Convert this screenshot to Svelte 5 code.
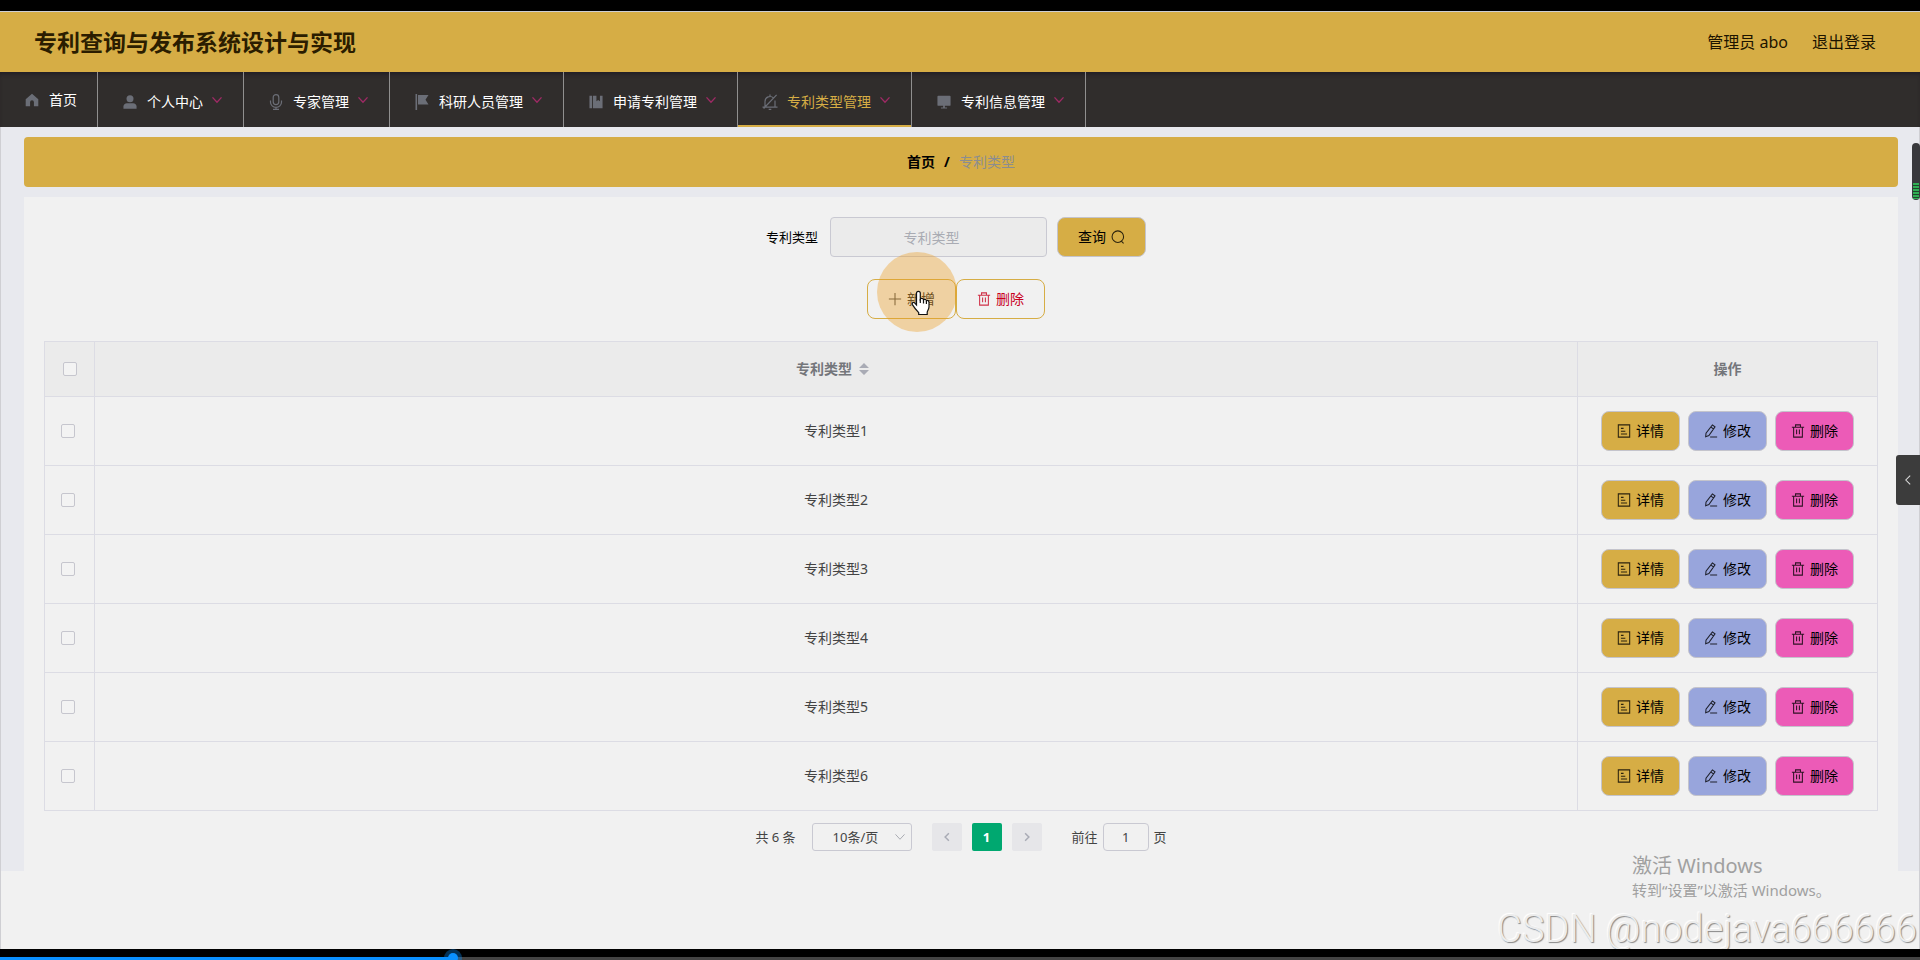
<script>
  const menus = [
    { name: '个人中心', icon: 'user' },
    { name: '专家管理', icon: 'mic' },
    { name: '科研人员管理', icon: 'flag' },
    { name: '申请专利管理', icon: 'book' },
    { name: '专利类型管理', icon: 'bell', active: true },
    { name: '专利信息管理', icon: 'monitor' },
  ];

  let rows = $state([1, 2, 3, 4, 5, 6].map((n) => ({ id: n, name: `专利类型${n}`, checked: false })));
  let keyword = $state('');
  let pageSize = $state('10');
  let jumpTo = $state('1');
  const played = 23.6;

  let allChecked = $derived(rows.every((r) => r.checked));

  function toggleAll() {
    const next = !allChecked;
    rows.forEach((r) => (r.checked = next));
  }
</script>

{#snippet icon(name)}
  <svg class="icon {name}" viewBox="0 0 16 16" aria-hidden="true">
    {#if name === 'home'}
      <path fill="currentColor" d="M8 .8 15.2 7v8.2H10.2V10.5a2.2 2.2 0 0 0-4.4 0v4.7H.8V7z" />
    {:else if name === 'user'}
      <circle cx="8" cy="4.4" r="4" fill="currentColor" />
      <path fill="currentColor" d="M.5 15.6v-2.4C.5 10.8 2.3 9.4 4.5 9.4h7c2.2 0 4 1.4 4 3.8v2.4z" />
    {:else if name === 'mic'}
      <g class="line"><rect x="5.2" y=".6" width="5.6" height="10" rx="2.8" /><path d="M2.5 6.5v1.8a5.5 5 0 0 0 11 0V6.500M8 13.300v2M5 15.400h6" /></g>
    {:else if name === 'flag'}
      <path fill="currentColor" d="M1.5 0h1.6v16H1.5zM4 1h10.500l-3 4.700 3 4.700H4z" />
    {:else if name === 'book'}
      <path fill="currentColor" d="M.5.8h3v14.4h-3zM4.5.8h4v6.4l2-1.6 2 1.6V.8h3v14.4h-11z" />
    {:else if name === 'bell'}
      <g class="line"><path d="M3 13V7.500a5 5 0 0 1 8.600-3.400M13 6.500V13M.5 13.200h15M6.700 15.400h2.600M8 2.400V.6M1.600 14.500 14.600.8" /></g>
    {:else if name === 'monitor'}
      <path fill="currentColor" d="M1.5.8h13a1 1 0 0 1 1 1v9.6a1 1 0 0 1-1 1h-13a1 1 0 0 1-1-1V1.8a1 1 0 0 1 1-1zM7 12.400h2v1.800h2.500v1.200h-7v-1.200H7z" />
    {:else if name === 'down'}
      <path class="line" d="M2 4.500 8 11 14 4.500" />
    {:else if name === 'left'}
      <path class="line" d="M10.500 3 5.500 8l5 5" />
    {:else if name === 'right'}
      <path class="line" d="m5.500 3 5 5-5 5" />
    {:else if name === 'magnifier'}
      <g class="line"><circle cx="7.8" cy="7.6" r="6.6" /><path d="m11.800 12.600 2.600 2.600" /></g>
    {:else if name === 'plus'}
      <path class="line" d="M8 1v14M1 8h14" />
    {:else if name === 'trash'}
      <path class="line" d="M1 3.600h14M3 3.600v11.400h10V3.600M5.200 3.400V1h5.600v2.400M6.400 6.400v5.400M9.600 6.400v5.400" />
    {:else if name === 'doc'}
      <path class="line" d="M1.500 1h13v14h-13zM4.500 5h3M4.500 8.200h5M4.500 11.500h7" />
    {:else if name === 'edit'}
      <path class="line" d="M9.600 1.200 12.600 3.300 5.600 13.200 1.900 14.600l.4-4zM8 3.600l3 2.100M7 14.800H15" />
    {/if}
  </svg>
{/snippet}

<div class="player">
  <div class="screen">
    <header>
      <h1>专利查询与发布系统设计与实现</h1>
      <div class="account">
        <span>管理员 abo</span>
        <a href="#logout">退出登录</a>
      </div>
    </header>

    <nav>
      <a class="item home" href="#home">{@render icon('home')}<span>首页</span></a>
      {#each menus as menu}
        <a class="item sub" class:active={menu.active} href="#{menu.icon}">
          {@render icon(menu.icon)}<span>{menu.name}</span>{@render icon('down')}
        </a>
      {/each}
    </nav>

    <main>
      <div class="breadcrumb">
        <a href="#home">首页</a><b>/</b><span>专利类型</span>
      </div>

      <section class="panel">
        <form class="search" onsubmit={(e) => e.preventDefault()}>
          <label for="keyword">专利类型</label>
          <input id="keyword" type="text" placeholder="专利类型" bind:value={keyword} />
          <button class="btn gold wide" type="submit">查询{@render icon('magnifier')}</button>
        </form>

        <div class="tools">
          <button class="btn outline wide" type="button">{@render icon('plus')}新增</button>
          <button class="btn outline wide danger" type="button">{@render icon('trash')}删除</button>
        </div>

        <table>
          <colgroup><col class="c-check" /><col /><col class="c-ops" /></colgroup>
          <thead>
            <tr>
              <th><input type="checkbox" aria-label="全选" checked={allChecked} onchange={toggleAll} /></th>
              <th>
                <span class="sortable">专利类型
                  <svg class="carets" viewBox="0 0 10 12" aria-hidden="true"><path d="M5 0l5 5H0zM5 12l5-5H0z" /></svg>
                </span>
              </th>
              <th>操作</th>
            </tr>
          </thead>
          <tbody>
            {#each rows as row (row.id)}
              <tr>
                <td class="check"><input type="checkbox" aria-label={row.name} bind:checked={row.checked} /></td>
                <td>{row.name}</td>
                <td>
                  <div class="ops">
                    <button class="btn gold" type="button">{@render icon('doc')}详情</button>
                    <button class="btn blue" type="button">{@render icon('edit')}修改</button>
                    <button class="btn pink" type="button">{@render icon('trash')}删除</button>
                  </div>
                </td>
              </tr>
            {/each}
          </tbody>
        </table>

        <div class="pagination">
          <span>共 {rows.length} 条</span>
          <div class="sizes">
            <select aria-label="每页条数" bind:value={pageSize}>
              <option value="10">10条/页</option>
              <option value="20">20条/页</option>
            </select>
            {@render icon('down')}
          </div>
          <div class="pager">
            <button type="button" aria-label="上一页" disabled>{@render icon('left')}</button>
            <button type="button" class="current">1</button>
            <button type="button" aria-label="下一页" disabled>{@render icon('right')}</button>
          </div>
          <div class="jump">
            <label for="jump">前往</label>
            <input id="jump" type="text" bind:value={jumpTo} />
            <span>页</span>
          </div>
        </div>
      </section>
    </main>

    <div class="click-spot">
      <svg class="hand" viewBox="0 0 19 26" aria-hidden="true">
        <path d="M5.500 15V3.200a1.900 1.900 0 0 1 3.800 0V9c.6-1 3-.8 3.200.8.8-.9 2.700-.5 2.900.9 1-.7 2.600 0 2.600 1.500v4.600c0 2.600-1.500 3.700-1.800 5.400v2.300H7.700v-1.800C5.800 20.600 3.200 17.500 1.400 14.600c-.8-1.500.8-2.800 2.200-1.700z" />
        <path class="knuckle" d="M9.300 9v4M12.500 10v3.500M15.400 11v3" />
      </svg>
    </div>

    <div class="meter"><i></i></div>
    <button class="drawer" type="button" aria-label="展开">{@render icon('left')}</button>

    <div class="activate">
      <p class="big">激活 Windows</p>
      <p>转到“设置”以激活 Windows。</p>
    </div>
    <div class="watermark">CSDN @nodejava666666</div>
  </div>

  <div class="timeline">
    <div class="track"><div class="fill" style:width="{played}%"></div></div>
  </div>
</div>

<style>
  :global(body) { background: #000; }

  .player {
    --gold: #d6ad45;
    --line: #dcdce4;
    box-sizing: border-box;
    display: flex;
    flex-direction: column;
    min-height: 100vh;
    padding-top: 11px;
    font-family: "Noto Sans", "Noto Sans CJK SC", sans-serif;
    font-size: 14px;
    line-height: 20px;
    color: #444;
    overflow: hidden;
  }
  .player * { box-sizing: border-box; }

  .screen {
    position: relative;
    flex: 1;
    background: #f1f1f1;
    border: 1px solid #cfcfd3;
    border-width: 1px 1px 0;
  }

  button, input, select { font: inherit; color: inherit; margin: 0; }
  button { cursor: pointer; }
  a { color: inherit; text-decoration: none; }

  .icon { width: 14px; height: 14px; flex: none; }
  .line { fill: none; stroke: currentColor; stroke-width: 1.2; }

  header {
    display: flex;
    align-items: center;
    justify-content: space-between;
    height: 60px;
    margin: 0 -1px;
    padding: 0 44px 0 34px;
    background: var(--gold);
  }
  h1 { margin: 0; font-size: 23px; line-height: 32px; color: #2b1d00; }
  .account { display: flex; gap: 24px; font-size: 16px; color: #1c1400; }

  nav {
    display: flex;
    height: 55px;
    margin: 0 -1px;
    background: #302d2c;
    box-shadow: inset 0 4px 4px -2px #201d24;
    color: #fff;
  }
  .item {
    display: flex;
    align-items: center;
    padding: 4px 20px 0;
    border-right: 1px solid #908f8f;
  }
  .item.home { padding-top: 1px; }
  .item .icon { margin: 0 10px 0 5px; color: #6b6e77; }
  .item .icon.mic, .item .icon.bell, .item .icon.flag { width: 16px; height: 16px; margin: 0 9px 0 4px; }
  .item .icon.down { width: 12px; height: 12px; margin: -4px 0 0 8px; color: #a02a66; }
  .item .down .line { stroke-width: 1.8; }
  .item.active { color: var(--gold); box-shadow: inset 0 -2px var(--gold); }

  main { padding: 10px 21px 0 23px; background: #e8e9ee; }

  .breadcrumb {
    display: flex;
    align-items: center;
    justify-content: center;
    gap: 9px;
    height: 50px;
    border-radius: 4px;
    background: var(--gold);
    color: #8b8d90;
  }
  .breadcrumb a, .breadcrumb b { color: #000; font-weight: 700; }

  .panel { min-height: 674px; margin-top: 10px; padding: 20px; background: #f1f1f1; }

  .search { display: flex; align-items: center; justify-content: center; gap: 10px; padding-right: 10px; }
  .search label { font-size: 13px; color: #000; padding-right: 2px; }
  .search input {
    width: 217px;
    height: 40px;
    padding: 0 30px 0 16px;
    border: 1px solid #c9c9d2;
    border-radius: 4px;
    background: #ebebeb;
    text-align: center;
  }
  .search input::placeholder { color: #a9abb3; opacity: 1; }

  .btn {
    display: inline-flex;
    align-items: center;
    justify-content: center;
    gap: 5px;
    height: 40px;
    padding: 0 15px;
    border: 1px solid #c4c4cc;
    border-radius: 8px;
    color: #000;
  }
  .btn .icon { opacity: 0.8; }
  .btn.wide { padding: 0 20px; }
  .gold { background: var(--gold); }
  .blue { background: #98a5dc; }
  .pink { background: #ec5bb7; }
  .outline { background: transparent; border-color: var(--gold); color: #222; }
  .danger { color: #c8001e; }

  .tools { display: flex; justify-content: center; margin: 22px 0; padding-right: 10px; }

  table { width: 100%; table-layout: fixed; border-collapse: collapse; text-align: center; }
  .c-check { width: 50px; }
  .c-ops { width: 300px; }
  th, td { padding: 0; border: 1px solid var(--line); }
  th { height: 55px; background: #ebebeb; color: #74767b; font-weight: 700; }
  td { height: 69px; }
  .check { padding-right: 4px; }
  .sortable { display: inline-flex; align-items: center; gap: 7px; padding-right: 7px; }
  .carets { width: 10px; height: 12px; fill: #a9abb5; }
  .ops { display: flex; justify-content: center; gap: 8px; }

  input[type='checkbox'] {
    appearance: none;
    display: block;
    width: 14px;
    height: 14px;
    margin: 0 auto;
    border: 1px solid #c6c6ce;
    border-radius: 2px;
    background: #f3f3f3;
  }
  input[type='checkbox']:checked { background: #00a870; }

  .pagination {
    display: flex;
    align-items: center;
    justify-content: center;
    height: 28px;
    margin-top: 12px;
    font-size: 13px;
  }
  .sizes { position: relative; margin: 0 20px 0 16px; }
  .sizes select {
    appearance: none;
    display: block;
    width: 100px;
    height: 28px;
    padding: 0 20px;
    border: 1px solid #c9c9d2;
    border-radius: 3px;
    background: transparent;
  }
  .sizes .icon { position: absolute; top: 8px; right: 6px; width: 12px; height: 12px; color: #a2a4ac; pointer-events: none; }
  .pager { display: flex; gap: 10px; }
  .pager button {
    display: flex;
    align-items: center;
    justify-content: center;
    width: 30px;
    height: 28px;
    padding: 0;
    border: 0;
    border-radius: 2px;
    background: #e6e6e9;
    color: #a9abb5;
    font-weight: 700;
  }
  .pager .icon .line { stroke-width: 2; }
  .pager .icon { width: 12px; height: 12px; }
  .pager .current { background: #00a870; color: #fff; }
  .jump { display: flex; align-items: center; margin-left: 30px; }
  .jump input {
    width: 46px;
    height: 28px;
    margin: 0 5px;
    padding: 0;
    border: 1px solid #c9c9d2;
    border-radius: 4px;
    background: transparent;
    text-align: center;
  }

  /* click highlight and pointer of the screen recorder */
  .click-spot {
    position: absolute;
    top: 240px;
    left: calc(50% - 83px);
    width: 80px;
    height: 80px;
    border-radius: 50%;
    background: rgba(236, 157, 34, 0.38);
    pointer-events: none;
  }
  .hand { position: absolute; top: 38px; left: 34px; width: 19px; height: 26px; fill: #fff; stroke: #111; stroke-width: 1.2; }
  .knuckle { fill: none; }

  .meter {
    position: absolute;
    top: 131px;
    right: -1px;
    display: flex;
    align-items: flex-end;
    width: 8px;
    height: 57px;
    padding: 1px;
    border-radius: 4px;
    background: #38383c;
  }
  .meter i { width: 100%; height: 16px; background: repeating-linear-gradient(#2fae54 0 2px, #22452d 2px 3px); }

  .drawer {
    position: absolute;
    top: 443px;
    right: -1px;
    display: flex;
    align-items: center;
    justify-content: center;
    width: 24px;
    height: 50px;
    padding: 0;
    border: 0;
    border-radius: 3px 0 0 3px;
    background: #3c3c3c;
    color: #ddd;
  }

  .activate { position: absolute; right: 92px; bottom: 49px; width: 195px; font-size: 15px; line-height: 20px; color: #a0a0a0; white-space: nowrap; }
  .activate p { margin: 0; }
  .activate .big { font-size: 20px; line-height: 28px; }

  .watermark {
    position: absolute;
    right: 2px;
    bottom: -2px;
    font-family: Roboto, "Open Sans", sans-serif;
    font-size: 38px;
    font-weight: 300;
    line-height: 44px;
    color: #ececec;
    text-shadow: 1px 1px 1px #888, -1px -1px 1px #fff;
    white-space: nowrap;
  }

  .timeline { position: relative; padding-top: 8px; background: #000; }
  .track { height: 3px; background: #444; }
  .fill { position: relative; height: 3px; background: #0a90ff; }
  .fill::after {
    content: '';
    position: absolute;
    top: -4px;
    right: -5px;
    width: 10px;
    height: 10px;
    border-radius: 50%;
    background: #0a90ff;
    box-shadow: 0 0 0 4px rgba(10, 144, 255, 0.35);
  }
</style>
